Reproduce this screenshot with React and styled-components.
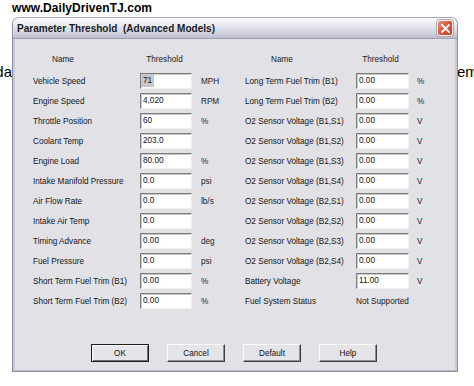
import React from "react";
import styled, { createGlobalStyle } from "styled-components";

const Global = createGlobalStyle`
  html, body { margin: 0; padding: 0; background: #ffffff; }
  body { font-family: "Liberation Sans", Arial, sans-serif; color: #111; }
`;

const Page = styled.div`
  width: 474px;
  height: 386px;
  overflow: hidden;
  background: #fff;
`;

const SiteName = styled.div`
  height: 17px;
  padding-left: 12px;
  font-size: 12px;
  font-weight: bold;
  line-height: 17px;
  color: #000;
  letter-spacing: 0.05px;
`;

const Desk = styled.div`
  display: flex;
  align-items: flex-start;
`;

const Sliver = styled.div`
  width: ${(p) => p.$w}px;
  overflow: hidden;
  white-space: nowrap;
  direction: ${(p) => (p.$side === "left" ? "rtl" : "ltr")};
  padding-top: 46px;
  font-size: 15px;
  line-height: 17px;
  color: #000;
  text-indent: ${(p) => (p.$side === "left" ? 0 : -1)}px;
`;

const Window = styled.div`
  width: 446px;
  box-sizing: border-box;
  border: 1px solid #8f91a3;
  border-top-color: #a2a4b4;
  border-radius: 7px 7px 0 0;
  overflow: hidden;
  background: #e2e1e6;
`;

const TitleBar = styled.div`
  height: 20px;
  display: flex;
  align-items: center;
  justify-content: space-between;
  padding: 0 4px 0 4px;
  background: linear-gradient(#fbfbfd 0%, #eceef4 30%, #d3d5e0 70%, #bdbfcd 100%);
  border-bottom: 1px solid #9ea0b2;
`;

const Title = styled.div`
  font-size: 10px;
  font-weight: bold;
  color: #1b1b1b;
  letter-spacing: 0.02px;
  padding-top: 1px;
`;

const CloseBtn = styled.div`
  width: 16px;
  height: 16px;
  box-sizing: border-box;
  border: 1px solid #f4f2f2;
  border-radius: 3px;
  background: linear-gradient(135deg, #ec9682 0%, #d9593d 45%, #c2412a 100%);
  display: flex;
  align-items: center;
  justify-content: center;
  box-shadow: 0 0 0 1px #b8a8a8;
`;

const Body = styled.div`
  padding: 12px 0 8px 18px;
  border-left: 2px solid #c9cad6;
  border-right: 2px solid #c9cad6;
  border-bottom: 1px solid #b7b8c6;
`;

const Columns = styled.div`
  display: flex;
`;

const Column = styled.div`
  display: grid;
  grid-template-columns: ${(p) => p.$cols};
  grid-auto-rows: 20px;
  align-items: center;
  font-size: 8.2px;
`;

const HeadName = styled.div`
  padding-left: ${(p) => p.$pad}px;
  margin-bottom: 3px;
  color: #1a1a1a;
`;

const HeadThreshold = styled.div`
  text-align: center;
  margin-bottom: 3px;
  padding-right: ${(p) => p.$shift}px;
  color: #1a1a1a;
`;

const Label = styled.div`
  color: #151515;
  white-space: nowrap;
`;

const Field = styled.div`
  height: 16px;
  box-sizing: border-box;
  background: #fff;
  border: 1px solid;
  border-color: #7c7c7c #f0f0f0 #f0f0f0 #7c7c7c;
  box-shadow: inset 1px 1px 0 #c8c8c8;
  padding: 0 0 0 2px;
  line-height: 14px;
  color: #111;
  white-space: nowrap;
`;

const Selected = styled.span`
  background: #c6c6cc;
  padding: 0 2px 0 1px;
  margin-left: -1px;
  display: inline-block;
  line-height: 13px;
`;

const Unit = styled.div`
  padding-left: ${(p) => p.$pad}px;
  color: #1a1a1a;
  white-space: nowrap;
`;

const Status = styled.div`
  grid-column: span 2;
  color: #1a1a1a;
`;

const ButtonRow = styled.div`
  display: flex;
  gap: 18px;
  margin-top: 33px;
  padding-left: 58px;
`;

const Button = styled.div`
  width: 58px;
  height: 18px;
  box-sizing: border-box;
  display: flex;
  align-items: center;
  justify-content: center;
  font-size: 8.2px;
  color: #111;
  background: #e5e4e9;
  border: 1px solid;
  border-color: ${(p) =>
    p.$default ? "#1e1e1e" : "#fafafa #404040 #404040 #fafafa"};
  box-shadow: ${(p) =>
    p.$default
      ? "inset 1px 1px 0 #fafafa, inset -1px -1px 0 #6e6e6e"
      : "inset -1px -1px 0 #8e8e8e"};
`;

const left = [
  ["Vehicle Speed", "71", "MPH", true],
  ["Engine Speed", "4,020", "RPM"],
  ["Throttle Position", "60", "%"],
  ["Coolant Temp", "203.0", ""],
  ["Engine Load", "80.00", "%"],
  ["Intake Manifold Pressure", "0.0", "psi"],
  ["Air Flow Rate", "0.0", "lb/s"],
  ["Intake Air Temp", "0.0", ""],
  ["Timing Advance", "0.00", "deg"],
  ["Fuel Pressure", "0.0", "psi"],
  ["Short Term Fuel Trim (B1)", "0.00", "%"],
  ["Short Term Fuel Trim (B2)", "0.00", "%"],
];

const right = [
  ["Long Term Fuel Trim (B1)", "0.00", "%"],
  ["Long Term Fuel Trim (B2)", "0.00", "%"],
  ["O2 Sensor Voltage (B1,S1)", "0.00", "V"],
  ["O2 Sensor Voltage (B1,S2)", "0.00", "V"],
  ["O2 Sensor Voltage (B1,S3)", "0.00", "V"],
  ["O2 Sensor Voltage (B1,S4)", "0.00", "V"],
  ["O2 Sensor Voltage (B2,S1)", "0.00", "V"],
  ["O2 Sensor Voltage (B2,S2)", "0.00", "V"],
  ["O2 Sensor Voltage (B2,S3)", "0.00", "V"],
  ["O2 Sensor Voltage (B2,S4)", "0.00", "V"],
  ["Battery Voltage", "11.00", "V"],
];

function Rows({ rows, unitPad }) {
  return rows.map(([name, value, unit, sel]) => (
    <React.Fragment key={name}>
      <Label>{name}</Label>
      <Field>{sel ? <Selected>{value}</Selected> : value}</Field>
      <Unit $pad={unitPad}>{unit}</Unit>
    </React.Fragment>
  ));
}

export default function App() {
  return (
    <Page>
      <Global />
      <SiteName>www.DailyDrivenTJ.com</SiteName>
      <Desk>
        <Sliver $w={12} $side="left">da</Sliver>
        <Window>
          <TitleBar>
            <Title>Parameter Threshold&nbsp;&nbsp;(Advanced Models)</Title>
            <CloseBtn>
              <svg width="9" height="9" viewBox="0 0 9 9">
                <path
                  d="M1 1 L8 8 M8 1 L1 8"
                  stroke="#ffffff"
                  strokeWidth="1.8"
                  strokeLinecap="round"
                />
              </svg>
            </CloseBtn>
          </TitleBar>
          <Body>
            <Columns>
              <Column $cols="107px 52px 53px">
                <HeadName $pad={19}>Name</HeadName>
                <HeadThreshold $shift={3}>Threshold</HeadThreshold>
                <div />
                <Rows rows={left} unitPad={9} />
              </Column>
              <Column $cols="111px 53px 40px">
                <HeadName $pad={26}>Name</HeadName>
                <HeadThreshold $shift={4}>Threshold</HeadThreshold>
                <div />
                <Rows rows={right} unitPad={8} />
                <Label>Fuel System Status</Label>
                <Status>Not Supported</Status>
              </Column>
            </Columns>
            <ButtonRow>
              <Button $default>OK</Button>
              <Button>Cancel</Button>
              <Button>Default</Button>
              <Button>Help</Button>
            </ButtonRow>
          </Body>
        </Window>
        <Sliver $w={16} $side="right">em</Sliver>
      </Desk>
    </Page>
  );
}
